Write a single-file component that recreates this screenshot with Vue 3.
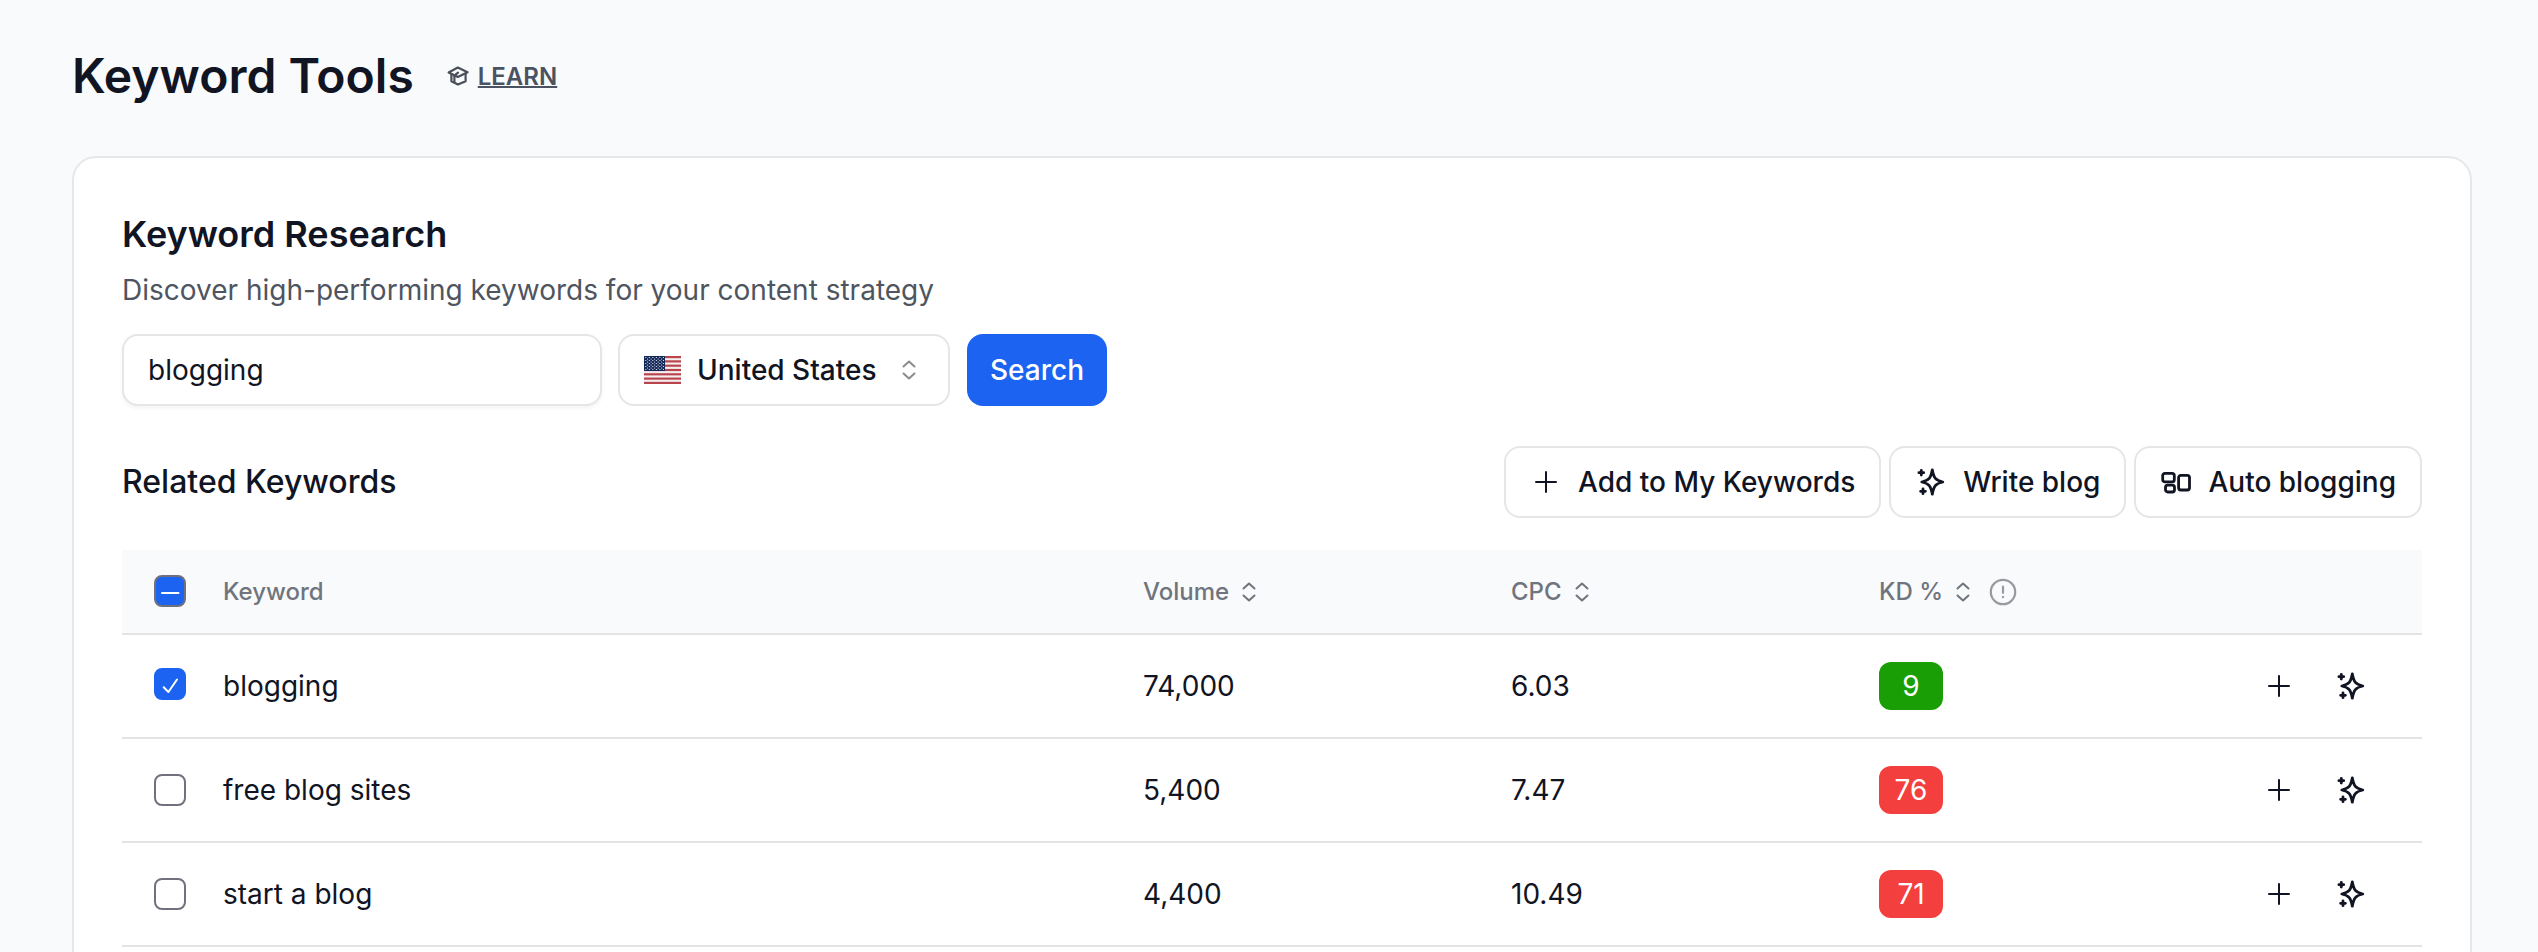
<script setup>
import { ref, computed } from 'vue'

const query = ref('blogging')

const columns = [
  { key: 'volume', label: 'Volume' },
  { key: 'cpc', label: 'CPC' },
  { key: 'kd', label: 'KD %', info: true },
]

const rows = ref([
  { keyword: 'blogging', volume: '74,000', cpc: '6.03', kd: 9, checked: true },
  { keyword: 'free blog sites', volume: '5,400', cpc: '7.47', kd: 76, checked: false },
  { keyword: 'start a blog', volume: '4,400', cpc: '10.49', kd: 71, checked: false },
])

const someChecked = computed(() => rows.value.some((r) => r.checked))

// odd stripes of the flag are red
const stripes = [0, 2, 4, 6, 8, 10, 12]

const stars = computed(() => {
  let list = []
  for (let r = 0; r < 9; r++) {
    for (let c = r % 2; c < 11; c += 2) {
      list.push({ x: 1.8 + c * 1.76, y: 1.5 + r * 1.5 })
    }
  }
  return list
})
</script>

<template>
  <div class="page">
    <header class="page_header">
      <h1>Keyword Tools</h1>
      <a class="learn">
        <svg width="24" height="24" viewBox="0 0 24 24">
          <path d="M11.8 3.6 L2.6 8.4 L11.8 13 L21.6 8.2 Z" />
          <path d="M5.4 10 V17.2 L12 20.6 L19.6 17.2 V9.5" />
          <path d="M12 8.6 L8.4 11.6 V18.2" />
        </svg>
        <span>LEARN</span>
      </a>
    </header>

    <section class="card">
      <h2>Keyword Research</h2>
      <p class="subtitle">Discover high-performing keywords for your content strategy</p>

      <div class="search_row">
        <input v-model="query" class="search_input" type="text" />
        <button class="country">
          <svg class="flag" width="37" height="28" viewBox="0 0 37 28">
            <rect width="37" height="28" fill="#f3eef0" />
            <rect v-for="s in stripes" :key="s" x="0" :y="s * 2.154" width="37" height="2.154" fill="#b9444c" />
            <rect width="21" height="15" fill="#14295a" />
            <circle v-for="(s, i) in stars" :key="i" :cx="s.x" :cy="s.y" r="0.6" fill="#fff" />
          </svg>
          <span>United States</span>
          <svg class="chevrons" width="14" height="20" viewBox="0 0 14 20">
            <path d="M1.5 6.5 L7 1.5 L12.5 6.5 M1.5 13.5 L7 18.5 L12.5 13.5" />
          </svg>
        </button>
        <button class="search_btn">Search</button>
      </div>

      <div class="toolbar">
        <h3>Related Keywords</h3>
        <div class="actions">
          <button class="action">
            <svg class="icon" width="32" height="32" viewBox="0 0 32 32">
              <path d="M16 6 V26 M6 16 H26" stroke-width="2" />
            </svg>
            <span>Add to My Keywords</span>
          </button>
          <button class="action">
            <svg class="icon" width="32" height="32" viewBox="0 0 32 32">
              <path d="M17.3 3.8 C18.8 12.2 20.5 14.4 27.8 16 C20.5 17.6 18.8 19.8 17.3 28.2 C15.8 19.8 14.1 17.6 6.8 16 C14.1 14.4 15.8 12.2 17.3 3.8 Z" />
              <path d="M6.3 4.3 V9.1 M3.9 6.7 H8.7 M8 22.9 V27.7 M5.6 25.3 H10.4" />
            </svg>
            <span>Write blog</span>
          </button>
          <button class="action">
            <svg class="icon" width="32" height="32" viewBox="0 0 32 32">
              <rect x="2.7" y="7.3" width="11.6" height="8.6" rx="2.2" />
              <rect x="5.5" y="19.2" width="9" height="6.8" rx="2.2" />
              <rect x="18.6" y="9.4" width="10.9" height="14.6" rx="2.2" />
            </svg>
            <span>Auto blogging</span>
          </button>
        </div>
      </div>

      <table>
        <colgroup>
          <col class="c_check" />
          <col class="c_keyword" />
          <col class="c_num" />
          <col class="c_num" />
          <col class="c_num" />
          <col />
        </colgroup>
        <thead>
          <tr>
            <th class="check_cell">
              <span class="checkbox" :class="{ partial: someChecked }">
                <svg v-if="someChecked" width="32" height="32" viewBox="0 0 32 32">
                  <path d="M8 18 H24.5" />
                </svg>
              </span>
            </th>
            <th>Keyword</th>
            <th v-for="col in columns" :key="col.key">
              <div class="th_inner">
                <span>{{ col.label }}</span>
                <svg class="chevrons" width="14" height="20" viewBox="0 0 14 20">
                  <path d="M1.5 6.5 L7 1.5 L12.5 6.5 M1.5 13.5 L7 18.5 L12.5 13.5" />
                </svg>
                <svg v-if="col.info" class="info" width="28" height="28" viewBox="0 0 28 28">
                  <circle cx="14" cy="14" r="12.2" />
                  <path d="M14 8.5 V14.8 M14 18.8 V19.2" />
                </svg>
              </div>
            </th>
            <th></th>
          </tr>
        </thead>
        <tbody>
          <tr v-for="row in rows" :key="row.keyword">
            <td class="check_cell">
              <span class="checkbox" :class="{ checked: row.checked }" @click="row.checked = !row.checked">
                <svg v-if="row.checked" width="32" height="32" viewBox="0 0 32 32">
                  <path d="M9.7 19.3 L14.4 24 L23 11.5" />
                </svg>
              </span>
            </td>
            <td>{{ row.keyword }}</td>
            <td>{{ row.volume }}</td>
            <td>{{ row.cpc }}</td>
            <td>
              <span class="kd" :class="row.kd > 60 ? 'hard' : 'easy'">{{ row.kd }}</span>
            </td>
            <td class="row_actions">
              <div>
                <button>
                  <svg class="icon" width="32" height="32" viewBox="0 0 32 32">
                    <path d="M16 6 V26 M6 16 H26" stroke-width="2" />
                  </svg>
                </button>
                <button>
                  <svg class="icon" width="32" height="32" viewBox="0 0 32 32">
                    <path d="M17.3 3.8 C18.8 12.2 20.5 14.4 27.8 16 C20.5 17.6 18.8 19.8 17.3 28.2 C15.8 19.8 14.1 17.6 6.8 16 C14.1 14.4 15.8 12.2 17.3 3.8 Z" />
                    <path d="M6.3 4.3 V9.1 M3.9 6.7 H8.7 M8 22.9 V27.7 M5.6 25.3 H10.4" />
                  </svg>
                </button>
              </div>
            </td>
          </tr>
        </tbody>
      </table>
    </section>
  </div>
</template>

<style>
body {
  background: #f9fafc;
  overflow: hidden;
}
</style>

<style scoped>
.page {
  box-sizing: border-box;
  height: 952px;
  overflow: hidden;
  padding: 48px 66px 0 72px;
  font-family: Inter, sans-serif;
  font-size: 28px;
  color: #111422;
}

.page *,
.page *::before {
  box-sizing: border-box;
}

button {
  font: inherit;
  color: inherit;
  padding: 0;
  border: 0;
  background: none;
}

svg {
  display: block;
  flex: none;
  fill: none;
  stroke-linecap: round;
  stroke-linejoin: round;
}

h1,
h2,
h3,
p {
  margin: 0;
}

.page_header {
  display: flex;
  align-items: center;
  height: 56px;
  gap: 32px;
}

h1 {
  font-size: 48px;
  line-height: 56px;
  font-weight: 600;
}

.learn {
  display: flex;
  align-items: center;
  gap: 8px;
  font-size: 24px;
  font-weight: 600;
  color: #4b5261;
  text-decoration: underline;
  text-decoration-thickness: 2px;
}

.learn svg {
  stroke: #4b4f5a;
  stroke-width: 2.2;
}

.card {
  margin-top: 52px;
  height: 1000px;
  padding: 48px;
  background: #fff;
  border: 2px solid #e6e7ea;
  border-radius: 24px;
}

h2 {
  font-size: 36px;
  line-height: 56px;
  font-weight: 600;
}

.subtitle {
  line-height: 40px;
  margin-top: 8px;
  color: #4f5560;
}

.search_row {
  display: flex;
  gap: 16px;
  margin-top: 24px;
}

.search_input {
  width: 480px;
  height: 72px;
  padding: 0 24px;
  font: inherit;
  color: inherit;
  background: #fff;
  border: 2px solid #e5e6e8;
  border-radius: 16px;
  box-shadow: 0 2px 4px rgba(0, 0, 0, 0.05);
  outline: none;
}

.country {
  display: flex;
  align-items: center;
  width: 332px;
  height: 72px;
  padding: 0 32px 0 24px;
  font-weight: 500;
  border: 2px solid #e5e6e8;
  border-radius: 16px;
}

.country span {
  margin-left: 16px;
}

.country .chevrons {
  margin-left: auto;
  stroke: #8b8b8f;
}

.chevrons {
  stroke: #70747c;
  stroke-width: 2;
}

.search_btn {
  width: 140px;
  height: 72px;
  margin-left: 1px;
  font-weight: 500;
  color: #fff;
  background: #1b63f0;
  border-radius: 16px;
}

.toolbar {
  display: flex;
  align-items: center;
  justify-content: space-between;
  margin-top: 40px;
}

h3 {
  padding-bottom: 2px;
  font-size: 32px;
  font-weight: 500;
}

.actions {
  display: flex;
  gap: 8px;
}

.action {
  display: flex;
  align-items: center;
  gap: 16px;
  height: 72px;
  padding: 0 24px;
  font-weight: 500;
  border: 2px solid #e5e6e8;
  border-radius: 16px;
}

.icon {
  stroke: #111422;
  stroke-width: 2.8;
}

table {
  width: 100%;
  margin-top: 32px;
  table-layout: fixed;
  border-collapse: separate;
  border-spacing: 0;
}

.c_check {
  width: 69px;
}

.c_keyword {
  width: 920px;
}

.c_num {
  width: 368px;
}

th,
td {
  padding: 0 0 0 32px;
  text-align: left;
  border-bottom: 2px solid #e3e4e6;
}

th {
  height: 85px;
  font-size: 24px;
  font-weight: 500;
  color: #70747c;
  background: #f9fafc;
}

td {
  height: 104px;
}

.th_inner {
  display: flex;
  align-items: center;
}

.th_inner .chevrons {
  margin-left: 13px;
}

.th_inner .info {
  margin-left: 19px;
  stroke: #979a9e;
  stroke-width: 2.2;
}

.checkbox {
  display: block;
  width: 32px;
  height: 32px;
  border: 2px solid #70717c;
  border-radius: 8px;
  background: #fff;
}

.checkbox svg {
  margin: -2px;
  stroke: #fff;
  stroke-width: 2;
}

.checkbox.partial {
  background: #1b63f0;
  margin-bottom: 2px;
}

.checkbox.checked {
  background: #1b63f0;
  border-color: #1b63f0;
  margin-bottom: 4px;
}

.kd {
  display: flex;
  align-items: center;
  justify-content: center;
  width: 64px;
  height: 48px;
  color: #fff;
  border-radius: 12px;
}

.kd.easy {
  background: #199f05;
}

.kd.hard {
  background: #f43f3f;
}

.row_actions {
  padding-left: 28px;
}

.row_actions div {
  display: flex;
}

.row_actions button {
  display: flex;
  align-items: center;
  justify-content: center;
  width: 72px;
  height: 72px;
}
</style>
